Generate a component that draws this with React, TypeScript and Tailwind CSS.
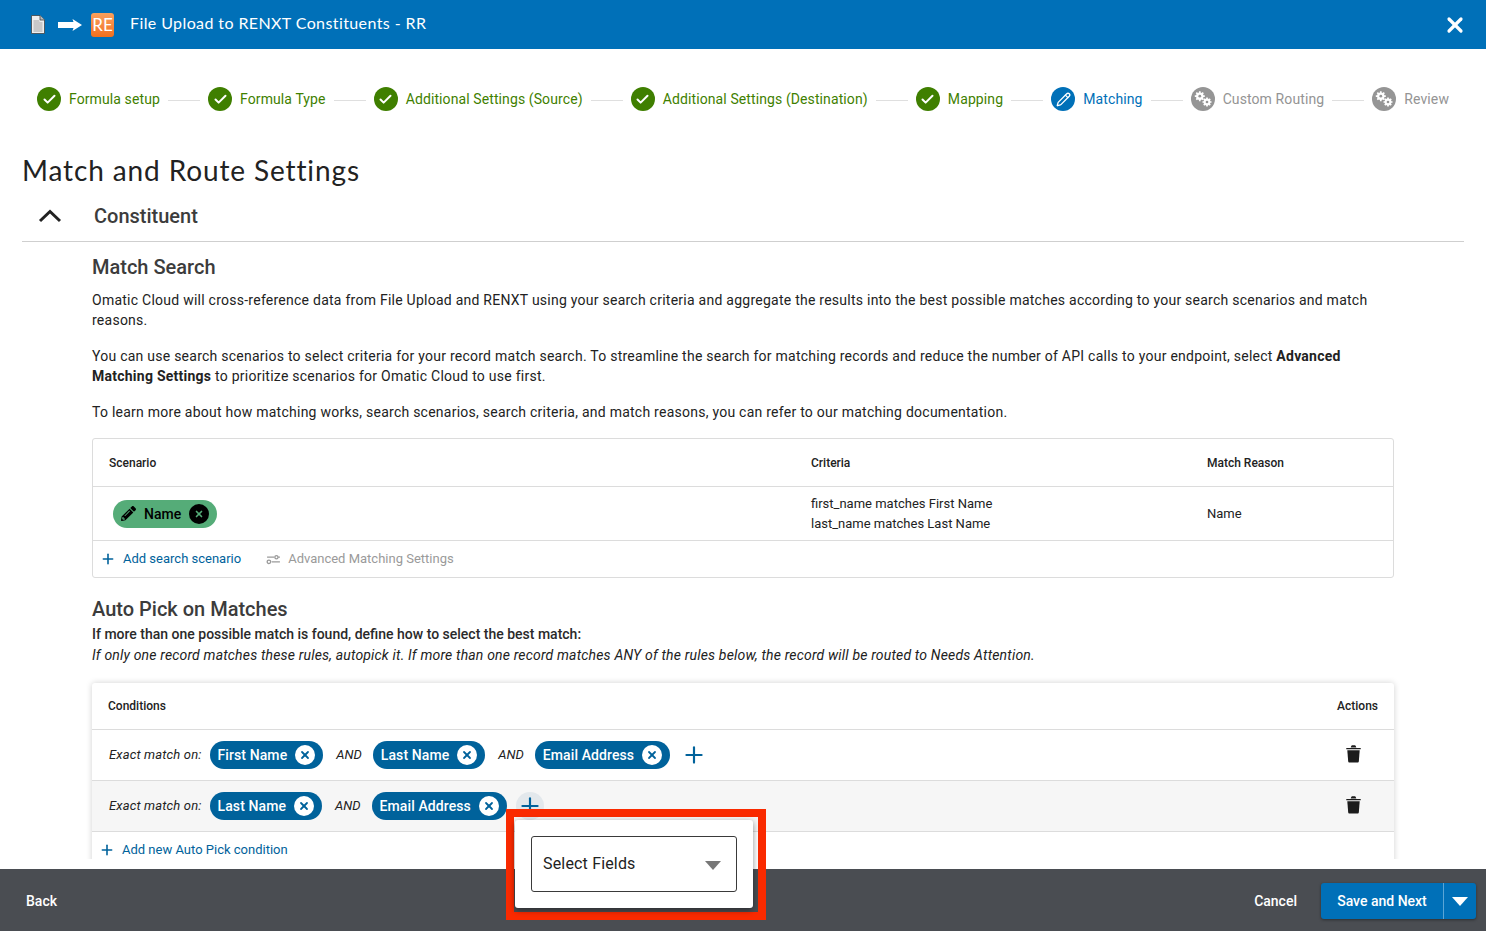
import React from "react";
import { Check, Pencil, Plus, X } from "lucide-react";
import { FaPencilAlt } from "react-icons/fa";

const Gears = () => (
  <svg viewBox="0 0 24 24" className="w-[24px] h-[24px] shrink-0">
    <circle cx="12" cy="12" r="12" fill="#959595" />
    <g fill="#fff">
      <circle cx="8.8" cy="9.2" r="3.7" />
      <circle cx="16" cy="15" r="3.4" />
      <g stroke="#fff" strokeWidth="1.7">
        <path d="M8.8 4.2v10M3.8 9.2h10M5.3 5.7l7 7M12.3 5.7l-7 7" />
        <path d="M16 10.5v9M11.5 15h9M12.8 11.8l6.4 6.4M19.2 11.8l-6.4 6.4" />
      </g>
    </g>
    <circle cx="8.8" cy="9.2" r="1.4" fill="#959595" />
    <circle cx="16" cy="15" r="1.3" fill="#959595" />
  </svg>
);

function Step({ label, state, last }: { label: string; state: "done" | "active" | "todo"; last?: boolean }) {
  const color = state === "done" ? "text-[#3f7f00]" : state === "active" ? "text-[#0070b8]" : "text-[#949494]";
  return (
    <div className={`flex items-center ${last ? "flex-none" : "flex-auto"}`}>
      {state === "done" && (
        <span className="w-[24px] h-[24px] rounded-full bg-[#3f7f00] flex items-center justify-center shrink-0">
          <Check size={15} strokeWidth={3.2} className="text-white" />
        </span>
      )}
      {state === "active" && (
        <span className="w-[24px] h-[24px] rounded-full bg-[#0070b8] flex items-center justify-center shrink-0">
          <Pencil size={15} strokeWidth={2.1} className="text-white" />
        </span>
      )}
      {state === "todo" && <Gears />}
      <span className={`ml-[8px] text-[14px] leading-[20px] whitespace-nowrap tracking-[0.1px] ${color}`}>{label}</span>
      {!last && <span className="flex-1 h-px bg-[#dfdfdf] mx-[8px] mt-[2px]" />}
    </div>
  );
}

function Chip({ label }: { label: string }) {
  return (
    <span className="h-[28px] rounded-full bg-[#00629b] text-white text-[14px] font-medium flex items-center pl-[8px] pr-[8px] whitespace-nowrap tracking-[0.1px]">
      {label}
      <span className="ml-[8px] w-[20px] h-[20px] rounded-full bg-white flex items-center justify-center">
        <X size={12} strokeWidth={3.6} className="text-[#00629b]" />
      </span>
    </span>
  );
}

const And = () => <span className="italic text-[13px] text-[#222] ml-[13px] mr-[11px]">AND</span>;

const Bin = () => (
  <svg viewBox="0 0 16 19" className="w-[15px] h-[18px] block mb-[3px]" fill="#1c1c1c">
    <path d="M0.3 3h15.4v1.4H0.3zM5.5 1.2C5.8 0.4 6.2 0.2 7 0.2h2c.8 0 1.2.2 1.5 1L11 2.6H5z" />
    <path d="M1.4 5.4h13.2l-.9 11.8c-.1.9-.6 1.4-1.4 1.4H3.7c-.8 0-1.3-.5-1.4-1.4z" />
  </svg>
);

export default function App() {
  return (
    <div className="relative h-[931px] w-[1486px] overflow-hidden flex flex-col bg-white font-['Roboto',sans-serif] text-[#222]">
      <header className="h-[49px] shrink-0 bg-[#0070b8] flex items-center pl-[31px] pr-[19px]">
        <svg viewBox="0 0 14 19" className="w-[14px] h-[19px] shrink-0">
          <path d="M.5.5h8.5l4.5 4.5v13.5H.5z" fill="#eee" stroke="#444" strokeWidth="0.8" />
          <path d="M9 .5v4.5h4.5" fill="#bbb" stroke="#444" strokeWidth="0.8" />
          <path d="M2.5 6h6M2.5 8h9M2.5 10h9M2.5 12h9M2.5 14h9M2.5 16h9" stroke="#999" strokeWidth="0.9" />
        </svg>
        <svg viewBox="0 0 24 12" className="ml-[13px] w-[24px] h-[12px] shrink-0">
          <path d="M0 3h15.5L14.5 0 24 6l-9.5 6 1-3H0z" fill="#fff" />
        </svg>
        <span className="ml-[9px] w-[23px] h-[24px] rounded-[3px] bg-gradient-to-b from-[#f9a05c] to-[#f26f1a] flex items-center justify-center text-white text-[17px] leading-none font-['Lato',sans-serif]">
          RE
        </span>
        <span className="ml-[16px] -mt-[3px] text-white text-[16px] font-['Lato',sans-serif] tracking-[0.4px]">
          File Upload to RENXT Constituents - RR
        </span>
        <X size={24} strokeWidth={3.2} className="ml-auto text-white" />
      </header>

      <div className="mb-[10px] flex-1 min-h-0 overflow-hidden flex flex-col px-[22px]">
        <nav className="flex items-center pl-[15px] pr-[15px] pt-[13px] h-[87px] shrink-0">
          <Step label="Formula setup" state="done" />
          <Step label="Formula Type" state="done" />
          <Step label="Additional Settings (Source)" state="done" />
          <Step label="Additional Settings (Destination)" state="done" />
          <Step label="Mapping" state="done" />
          <Step label="Matching" state="active" />
          <Step label="Custom Routing" state="todo" />
          <Step label="Review" state="todo" last />
        </nav>

        <h1 className="mt-[16px] text-[28px] leading-[36px] text-[#222] font-['Lato',sans-serif] tracking-[0.88px]">Match and Route Settings</h1>

        <div className="mt-[3px] h-[51px] shrink-0 border-b border-[#cfcfcf] flex items-center pl-[16px]">
          <svg viewBox="0 0 24 14" className="w-[24px] h-[14px]" fill="none" stroke="#222" strokeWidth="3">
            <path d="M2 12L12 2.5 22 12" />
          </svg>
          <span className="ml-[32px] text-[20px] font-medium text-[#3c3c3c]">Constituent</span>
        </div>

        <div className="pl-[70px] pr-[70px]">
          <h2 className="mt-[11px] text-[20px] leading-[28px] font-medium text-[#3c3c3c]">Match Search</h2>
          <p className="mt-[9px] text-[14px] leading-[20px] tracking-[0.25px]">
            Omatic Cloud will cross-reference data from File Upload and RENXT using your search criteria and aggregate the results into the best possible matches according to your search scenarios and match reasons.
          </p>
          <p className="mt-[16px] text-[14px] leading-[20px] tracking-[0.25px]">
            You can use search scenarios to select criteria for your record match search. To streamline the search for matching records and reduce the number of API calls to your endpoint, select <b className="font-bold">Advanced Matching Settings</b> to prioritize scenarios for Omatic Cloud to use first.
          </p>
          <p className="mt-[16px] text-[14px] leading-[20px] tracking-[0.25px]">
            To learn more about how matching works, search scenarios, search criteria, and match reasons, you can refer to our matching documentation.
          </p>

          <div className="mt-[16px] border border-[#dcdcdc] rounded-[3px] text-[12px]">
            <div className="h-[48px] grid grid-cols-[702px_396px_1fr] items-center border-b border-[#dcdcdc] pl-[16px] font-medium">
              <span>Scenario</span>
              <span>Criteria</span>
              <span>Match Reason</span>
            </div>
            <div className="h-[54px] grid grid-cols-[702px_396px_1fr] items-center border-b border-[#dcdcdc] pl-[16px]">
              <span className="ml-[4px] w-[104px] h-[28px] rounded-full bg-[#55ac78] flex items-center pl-[8px] text-[14px] font-medium text-black">
                <FaPencilAlt size={15} />
                <span className="ml-[8px] mt-[1px]">Name</span>
                <span className="ml-[8px] w-[20px] h-[20px] rounded-full bg-black flex items-center justify-center">
                  <X size={10} strokeWidth={4} className="text-[#55ac78]" />
                </span>
              </span>
              <span className="text-[13px] leading-[20px]">
                first_name matches First Name
                <br />
                last_name matches Last Name
              </span>
              <span className="text-[13px]">Name</span>
            </div>
            <div className="h-[36px] flex items-center pl-[7px] text-[13px]">
              <Plus size={16} strokeWidth={2.4} className="text-[#00629b]" />
              <span className="ml-[7px] text-[#00629b]">Add search scenario</span>
              <svg viewBox="0 0 16 12" className="ml-[25px] w-[15px] h-[11px]" fill="none" stroke="#9a9a9a" strokeWidth="1.4">
                <path d="M1 3.5h8M13 3.5h2M6 8.5h9" />
                <circle cx="11.2" cy="3.5" r="1.7" />
                <circle cx="3" cy="8.5" r="1.9" />
              </svg>
              <span className="ml-[7px] text-[#9a9a9a]">Advanced Matching Settings</span>
            </div>
          </div>

          <h2 className="mt-[17px] text-[20px] leading-[28px] font-medium text-[#3c3c3c]">Auto Pick on Matches</h2>
          <p className="text-[14px] leading-[20px] font-medium text-[#2a2a2a] mt-[1px]">
            If more than one possible match is found, define how to select the best match:
          </p>
          <p className="mt-[1px] text-[14px] leading-[20px] italic tracking-[0.175px]">
            If only one record matches these rules, autopick it. If more than one record matches ANY of the rules below, the record will be routed to Needs Attention.
          </p>

          <div className="mt-[18px] shadow-[0_0_6px_rgba(0,0,0,0.18)] rounded-[3px]">
            <div className="h-[47px] flex items-center justify-between px-[16px] border-b border-[#dcdcdc] text-[12px] font-medium">
              <span>Conditions</span>
              <span>Actions</span>
            </div>
            <div className="h-[51px] flex items-center pl-[17px] pr-[33px] border-b border-[#dcdcdc]">
              <span className="italic text-[13px] mr-[8px] tracking-[0.15px]">Exact match on:</span>
              <Chip label="First Name" />
              <And />
              <Chip label="Last Name" />
              <And />
              <Chip label="Email Address" />
              <Plus size={26} strokeWidth={2} className="ml-[11px] text-[#00629b]" />
              <span className="ml-auto"><Bin /></span>
            </div>
            <div className="h-[51px] flex items-center pl-[17px] pr-[33px] border-b border-[#dcdcdc] bg-[#f6f6f6]">
              <span className="italic text-[13px] mr-[8px] tracking-[0.15px]">Exact match on:</span>
              <Chip label="Last Name" />
              <And />
              <Chip label="Email Address" />
              <span className="ml-[9px] w-[28px] h-[28px] rounded-full bg-[#e3e8ec] flex items-center justify-center">
                <Plus size={26} strokeWidth={2} className="text-[#00629b]" />
              </span>
              <span className="ml-auto"><Bin /></span>
            </div>
            <div className="h-[36px] flex items-center pl-[7px] text-[13px] text-[#00629b]">
              <Plus size={16} strokeWidth={2.4} />
              <span className="ml-[7px]">Add new Auto Pick condition</span>
            </div>
          </div>
        </div>
      </div>

      <footer className="relative h-[62px] shrink-0 bg-[#4a4d52] flex items-center pt-[2px] pl-[26px] pr-[10px] text-white text-[14px] font-medium">
        <span>Back</span>
        <span className="ml-auto">Cancel</span>
        <div className="ml-[24px] h-[36px] w-[155px] rounded-[3px] bg-[#0070b8] flex items-center shadow-[0_1px_3px_rgba(0,0,0,0.4)]">
          <span className="w-[122px] text-center">Save and Next</span>
          <span className="w-px h-full bg-[#5aa5d6]" />
          <span className="flex-1 flex justify-center">
            <svg viewBox="0 0 16 9" className="w-[16px] h-[9px]"><path d="M0 0h16L8 9z" fill="#fff" /></svg>
          </span>
        </div>
      </footer>

      {/* Open field picker with annotation frame */}
      <div className="absolute left-[506px] top-[809px] w-[260px] h-[111px] border-[8px] border-[#fa2a00]">
        <div className="absolute left-[1px] top-[3px] w-[238px] h-[88px] bg-white rounded-[3px] shadow-[0_2px_6px_rgba(0,0,0,0.45)] px-[16px] pt-[16px]">
          <div className="h-[56px] border border-[#3a3a3a] rounded-[3px] flex items-center pl-[11px] pr-[15px] text-[16px] text-[#222] tracking-[0.17px]">
            Select Fields
            <svg viewBox="0 0 16 9" className="ml-auto w-[16px] h-[9px] mt-[3px]"><path d="M0 0h16L8 9z" fill="#777" /></svg>
          </div>
        </div>
      </div>
    </div>
  );
}
